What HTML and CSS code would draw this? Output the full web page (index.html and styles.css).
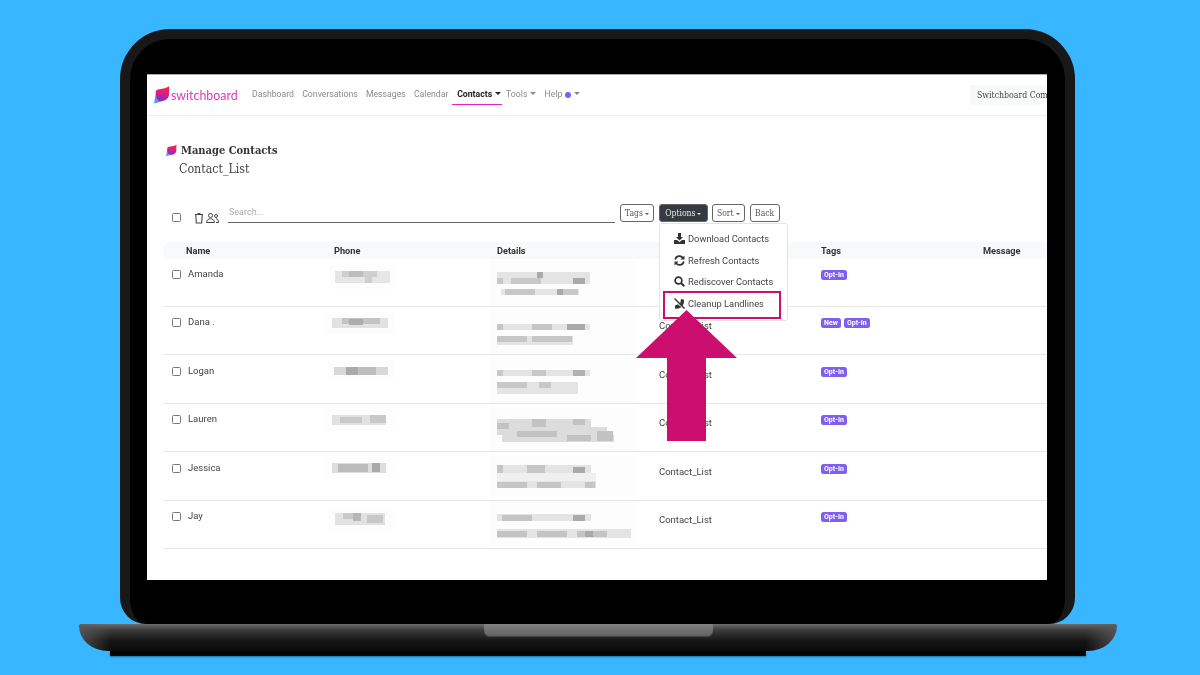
FILE: index.html
```html
<!DOCTYPE html>
<html lang="en">
<head>
<meta charset="utf-8">
<title>Switchboard - Manage Contacts</title>
<link rel="stylesheet" href="styles.css">
</head>
<body>
<svg class="defs" width="0" height="0" aria-hidden="true">
  <defs>
    <linearGradient id="leaf" x1="0.6" y1="0" x2="0.4" y2="1">
      <stop offset="0" stop-color="#f4263f"/><stop offset=".55" stop-color="#d81b8c"/><stop offset="1" stop-color="#6a35d8"/>
    </linearGradient>
    <linearGradient id="tail" x1="0" y1="0" x2="1" y2="1">
      <stop offset="0" stop-color="#9a7cf0"/><stop offset="1" stop-color="#3fa0f5"/>
    </linearGradient>
    <symbol id="logo" viewBox="0 0 18 20">
      <path fill="url(#tail)" d="M2 8 0 19.500C3 18.500 8 18 11.500 15z"/>
      <path fill="url(#leaf)" d="M2 6C3 3 9 3.500 12 2.500c2-.5 4-1.500 5-2.500v9c0 5-4 8-9 8-4 0-6-4-6-11z"/>
    </symbol>
  </defs>
</svg>
<div class="laptop">
  <div class="lid">
    <div class="screen">
      <nav class="nav">
        <div class="brand">
          <svg class="brand-mark" width="16" height="18"><use href="#logo"/></svg>
          <span class="brand-name">switchboard</span>
        </div>
        <a class="nav-link">Dashboard</a>
        <a class="nav-link">Conversations</a>
        <a class="nav-link">Messages</a>
        <a class="nav-link">Calendar</a>
        <a class="nav-link active caret">Contacts</a>
        <a class="nav-link caret">Tools</a>
        <a class="nav-link caret">Help <i class="dot"></i></a>
        <div class="account">Switchboard Com</div>
      </nav>
      <main class="main">
        <div class="title-row">
          <svg width="11" height="13"><use href="#logo"/></svg>
          <h1 class="title">Manage Contacts</h1>
        </div>
        <div class="subtitle">Contact_List</div>
        <div class="toolbar">
          <span class="check"></span>
          <svg class="tool-trash" width="10" height="12" viewBox="0 0 10 12" fill="none" stroke="#444" stroke-width="1.100"><path d="M3.500 1.500h3M1 2.500h8M1.800 2.500l.5 8.500h5.400l.5-8.500"/></svg>
          <svg class="tool-users" width="13" height="10" viewBox="0 0 13 10" fill="none" stroke="#444"><circle cx="4.500" cy="2.500" r="2"/><path d="M.6 9.500c0-5 7.800-5 7.800 0z"/><circle cx="10" cy="3" r="1.500"/><path d="M10 5.800c1.500 0 2.500 1.200 2.500 3.700h-2.500"/></svg>
          <div class="search">Search...</div>
          <button class="btn caret">Tags</button>
          <button class="btn dark caret">Options</button>
          <button class="btn caret">Sort</button>
          <button class="btn back">Back</button>
        </div>
        <div class="table">
          <div class="thead">
            <div class="th th-name">Name</div><div class="th">Phone</div><div class="th">Details</div><div class="th">Contact List</div><div class="th">Tags</div><div class="th">Message</div>
          </div>

          <div class="row">
            <div class="name"><span class="check"></span>Amanda</div>
            <div class="phone"><svg class="mos" width="55" height="12"><path fill="#e6e6e6" d="M0 0h55v6H0zM0 6h55v6H0z"/><path fill="#cfcfcf" d="M7 0h35v6H7zM30 6h7v6h-7z"/><path fill="#bdbdbd" d="M14 0h14v6H14z"/></svg></div>
            <div class="details"><svg class="mos" width="94" height="24"><path fill="#e4e4e4" d="M0 0h93v6H0zM0 6h93v6H0zM4 17h78v6H4z"/><path fill="#c8c8c8" d="M0 6h6v6H0zM14 6h30v6H14zM8 17h30v6H8zM65 17h16v6H65z"/><path fill="#aaa" d="M76 6h12v6H76zM40 0h6v6h-6zM60 17h6v6h-6z"/></svg></div>
            <div class="list">Contact_List</div>
            <div class="tags"><span class="badge">Opt-In</span></div>
            <div></div>
          </div>

          <div class="row">
            <div class="name"><span class="check"></span>Dana .</div>
            <div class="phone"><svg class="mos mos-left" width="57" height="10"><path fill="#e2e2e2" d="M0 0h56v10H0z"/><path fill="#c4c4c4" d="M10 0h38v6H10z"/><path fill="#adadad" d="M17 1h14v6H17z"/></svg></div>
            <div class="details"><svg class="mos mos-d2" width="94" height="22"><path fill="#e4e4e4" d="M0 0h93v6H0zM0 12h76v9H0z"/><path fill="#c6c6c6" d="M0 0h6v6H0zM35 0h20v6H35zM35 12h40v6H35zM0 12h30v6H0z"/><path fill="#aaa" d="M70 0h18v6H70z"/></svg></div>
            <div class="list">Contact_List</div>
            <div class="tags"><span class="badge">New</span><span class="badge">Opt-In</span></div>
            <div></div>
          </div>

          <div class="row">
            <div class="name"><span class="check"></span>Logan</div>
            <div class="phone"><svg class="mos mos-p3" width="55" height="8"><path fill="#d8d8d8" d="M0 0h54v8H0z"/><path fill="#bdbdbd" d="M12 0h30v8H12z"/><path fill="#aaa" d="M12 0h12v8H12z"/></svg></div>
            <div class="details"><svg class="mos mos-d3" width="94" height="24"><path fill="#e4e4e4" d="M0 0h93v6H0zM0 12h81v12H0z"/><path fill="#c8c8c8" d="M0 0h6v6H0zM35 0h14v6H35zM0 12h30v6H0zM42 12h12v6H42z"/><path fill="#b0b0b0" d="M76 0h12v6H76z"/></svg></div>
            <div class="list">Contact_List</div>
            <div class="tags"><span class="badge">Opt-In</span></div>
            <div></div>
          </div>

          <div class="row">
            <div class="name"><span class="check"></span>Lauren</div>
            <div class="phone"><svg class="mos mos-left" width="55" height="10"><path fill="#e2e2e2" d="M0 0h54v10H0z"/><path fill="#c8c8c8" d="M8 2h22v6H8zM38 0h16v8H38z"/></svg></div>
            <div class="details"><svg class="mos mos-d4" width="117" height="24"><path fill="#dcdcdc" d="M0 0h94v8H0zM0 8h110v8H0zM5 16h112v7H5z"/><path fill="#c2c2c2" d="M0 4h12v6H0zM35 0h14v8H35zM76 0h12v6H76zM20 12h40v6H20zM70 16h24v6H70zM100 12h16v10h-16z"/></svg></div>
            <div class="list">Contact_List</div>
            <div class="tags"><span class="badge">Opt-In</span></div>
            <div></div>
          </div>

          <div class="row">
            <div class="name"><span class="check"></span>Jessica</div>
            <div class="phone"><svg class="mos mos-left" width="55" height="10"><path fill="#dedede" d="M0 0h54v10H0z"/><path fill="#bcbcbc" d="M6 1h30v8H6z"/><path fill="#a8a8a8" d="M40 0h8v9h-8z"/></svg></div>
            <div class="details"><svg class="mos" width="100" height="24"><path fill="#e4e4e4" d="M0 0h94v8H0zM0 16h99v7H0z"/><path fill="#f0f0f0" d="M0 8h99v8H0z"/><path fill="#c6c6c6" d="M0 0h6v8H0zM30 0h18v8H30zM0 17h30v6H0zM40 17h24v6H40zM88 17h10v6H88z"/><path fill="#aaa" d="M76 2h12v6H76z"/></svg></div>
            <div class="list">Contact_List</div>
            <div class="tags"><span class="badge">Opt-In</span></div>
            <div></div>
          </div>

          <div class="row">
            <div class="name"><span class="check"></span>Jay</div>
            <div class="phone"><svg class="mos" width="52" height="12"><path fill="#e2e2e2" d="M0 0h50v12H0z"/><path fill="#c8c8c8" d="M8 0h12v6H8zM32 2h16v8H32z"/><path fill="#b8b8b8" d="M18 0h8v8h-8z"/></svg></div>
            <div class="details"><svg class="mos" width="135" height="25"><path fill="#e4e4e4" d="M0 0h94v7H0zM0 15h134v9H0z"/><path fill="#c4c4c4" d="M5 1h30v6H5zM0 17h30v6H0zM40 17h30v6H40zM80 17h30v6H80z"/><path fill="#aaa" d="M76 1h12v6H76zM88 17h8v6h-8z"/></svg></div>
            <div class="list">Contact_List</div>
            <div class="tags"><span class="badge">Opt-In</span></div>
            <div></div>
          </div>
        </div>
      </main>

      <div class="menu">
        <div class="menu-item">
          <svg width="11" height="11" viewBox="0 0 11 11" fill="#333"><path d="M4 0h3v4h2L5.500 7.500 2 4h2zM0 7h3l2.500 2L8 7h3v4H0z"/></svg>
          Download Contacts
        </div>
        <div class="menu-item">
          <svg width="11" height="11" viewBox="0 0 11 11" fill="none" stroke="#333" stroke-width="1.700"><path d="M1.200 4.500A4.300 4.300 0 0 1 9 3M9.800 6.500A4.300 4.300 0 0 1 2 8"/><path fill="#333" stroke="none" d="M10.500 .5v4h-4zM.5 10.500v-4h4z"/></svg>
          Refresh Contacts
        </div>
        <div class="menu-item">
          <svg width="11" height="11" viewBox="0 0 11 11" fill="none" stroke="#333" stroke-width="1.700"><circle cx="4.500" cy="4.500" r="3.400"/><path d="m7 7 3.300 3.300" stroke-width="2"/></svg>
          Rediscover Contacts
        </div>
        <div class="menu-item">
          <svg width="11" height="11" viewBox="0 0 11 11" fill="#333"><path d="M7 1l3 .8c.3 3-.6 5-2 6.500L6 6.500zM1 7.500l3-1.200 1.500 1.500 2 1.200C6 10.500 3 11 1 10.500z"/><path stroke="#333" stroke-width="1.400" d="M.5.500l10 10"/></svg>
          Cleanup Landlines
        </div>
      </div>
      <div class="highlight"></div>
      <svg class="arrow" width="101" height="131" viewBox="0 0 101 131"><path fill="#cc0e6e" d="M50.500 0 101 48H70v83H31V48H0z"/></svg>
    </div>
  </div>
  <div class="base">
    <div class="base-top"><div class="notch"></div></div>
    <div class="foot"></div>
  </div>
</div>
</body>
</html>
```

FILE: styles.css
```css
* { box-sizing: border-box; }
html, body { margin: 0; height: 100%; }
body {
  width: 1200px;
  height: 675px;
  overflow: hidden;
  background: #38b6ff;
  font-family: Roboto, "Liberation Sans", sans-serif;
  color: #444;
}
.defs { position: absolute; }
.laptop {
  display: flex;
  flex-direction: column;
  align-items: center;
  width: 1038px;
  margin: 29px 0 0 79px;
}
.lid {
  width: 955px;
  height: 595px;
  margin-left: -1px;
  padding: 35px 18px 0 17px;
  background: #000;
  border: 10px solid #181818;
  border-bottom: 0;
  border-radius: 50px 50px 26px 26px;
}
.screen {
  position: relative;
  width: 900px;
  height: 506px;
  overflow: hidden;
  background: #fff;
  border-top: 1px solid #aaa;
  filter: blur(.35px);
}

/* navbar */
.nav {
  display: flex;
  align-items: center;
  height: 41px;
  padding-left: 7px;
  border-bottom: 1px solid #ececec;
  font-size: 8.700px;
}
.brand { display: flex; align-items: center; gap: 1px; width: 98px; }
.brand-name { font-family: Lato, sans-serif; font-size: 12.400px; color: #e036c0; }
.nav-link { margin: 0 8.200px 2px 0; color: #8a8a8a; white-space: nowrap; }
.nav-link.active {
  margin: 0 4px .5px -4.500px;
  padding: 0 1px 0 5px;
  line-height: 20px;
  color: #222;
  font-weight: 700;
  border-bottom: 1.500px solid #e91fc0;
}
.caret::after {
  content: "";
  display: inline-block;
  margin-left: 3px;
  vertical-align: 2px;
  border: 3px solid transparent;
  border-top-color: currentColor;
  border-bottom: 0;
}
.dot {
  display: inline-block;
  width: 6px;
  height: 6px;
  border-radius: 50%;
  background: #7b61f0;
  vertical-align: -.5px;
}
.account {
  flex: none;
  width: 77px;
  margin-left: auto;
  padding: 0 0 0 7px;
  overflow: hidden;
  white-space: nowrap;
  line-height: 20px;
  background: #f8f9fa;
  font-family: "DejaVu Serif Condensed", "DejaVu Serif", serif;
  font-stretch: condensed;
  font-size: 8.700px;
  color: #444;
}

/* heading */
.main { padding: 25px 0 0 16px; }
.title-row { display: flex; align-items: center; gap: 4px; height: 19px; padding-left: 3px; }
.title {
  margin: 0;
  font-family: "DejaVu Serif Condensed", "DejaVu Serif", serif;
  font-stretch: condensed;
  font-size: 11px;
  font-weight: 700;
  color: #333;
}
.subtitle {
  padding-left: 16px;
  line-height: 19px;
  font-family: "DejaVu Serif Condensed", "DejaVu Serif", serif;
  font-stretch: condensed;
  font-size: 12.300px;
  color: #444;
}

/* toolbar */
.toolbar { display: flex; align-items: flex-start; height: 19px; margin-top: 25px; }
.check {
  flex: none;
  display: inline-block;
  width: 9px;
  height: 9px;
  border: 1px solid #777;
  border-radius: 1.500px;
}
.toolbar > .check { margin: 9px 0 0 9px; }
.tool-trash { margin: 8px 0 0 13px; }
.tool-users { margin: 9px 0 0 2px; }
.search {
  width: 387px;
  height: 19px;
  margin: 0 5px 0 9px;
  padding: 3px 0 0 1px;
  border-bottom: 1px solid #666;
  font-size: 9px;
  color: #aaa;
}
.btn {
  height: 18px;
  margin-right: 5px;
  padding: 0 4px;
  background: #fff;
  border: 1px solid #666;
  border-radius: 3px;
  font-family: "DejaVu Serif Condensed", "DejaVu Serif", serif;
  font-stretch: condensed;
  font-size: 8.500px;
  color: #555;
  white-space: nowrap;
}
.btn.dark { background: #343a40; color: #e8e8e8; margin-right: 4px; padding: 0 5.500px; }
.btn.back { padding: 0 4.500px; }
.btn.caret::after { vertical-align: 1.500px; margin-left: 2px; border-width: 2.500px; border-bottom: 0; }

/* table */
.table { margin-top: 19px; }
.thead, .row {
  display: grid;
  grid-template-columns: 171px 163px 162px 162px 162px 1fr;
}
.thead {
  height: 16.600px;
  background: #f8f9fa;
  border-radius: 8px 0 0 8px;
}
.th { font-size: 9.200px; font-weight: 700; line-height: 18px; color: #333; }
.th-name { padding-left: 23px; }
.row {
  height: 48.400px;
  border-bottom: 1px solid #e8e8e8;
  font-size: 9.500px;
}
.name {
  display: flex;
  align-items: flex-start;
  gap: 7px;
  padding: 10.500px 0 0 9px;
  line-height: 10px;
}
.name .check { margin-top: 1px; }
.phone { padding-top: 12px; }
.phone .mos { box-shadow: 0 0 0 6px #fdfdfd; background: #fdfdfd; margin-left: 1px; }
.phone .mos-left { margin-left: -2px; margin-top: -1px; }
.phone .mos-p3 { margin-left: 0; margin-top: 0; }
.details { margin-left: -7px; padding: 13px 0 0 7px; background: #fcfdfc; width: 146px; }
.details .mos-d2 { margin-top: 4px; }
.details .mos-d3 { margin-top: 2px; }
.details .mos-d4 { margin-top: 2px; }
.mos { display: block; filter: blur(.7px); }
.list { padding-top: 13.500px; line-height: 12px; }
.tags { display: flex; gap: 3px; align-items: flex-start; padding-top: 11.500px; }
.badge {
  padding: 0 3px;
  height: 10px;
  line-height: 10px;
  border-radius: 2.500px;
  background: #7f5ff1;
  color: #fff;
  font-size: 7px;
  font-weight: 700;
}

/* overlays */
.menu {
  position: absolute;
  left: 512px;
  top: 148px;
  width: 129px;
  height: 98px;
  padding: 4px 0 0 14px;
  background: #fff;
  border: 1px solid #e4e4e4;
  border-radius: 3px;
  font-size: 9.300px;
  color: #444;
}
.menu-item { display: flex; align-items: center; gap: 3px; height: 21.500px; white-space: nowrap; }
.highlight {
  position: absolute;
  left: 516px;
  top: 216px;
  width: 118px;
  height: 28px;
  border: 2px solid #cc0e6e;
}
.arrow { position: absolute; left: 489px; top: 235px; }

/* laptop base */
.base { display: flex; flex-direction: column; align-items: center; width: 100%; }
.base-top {
  display: flex;
  justify-content: center;
  width: 100%;
  height: 27px;
  background:
    linear-gradient(90deg, rgba(90,90,90,.8), rgba(90,90,90,0) 32px, rgba(90,90,90,0) calc(100% - 32px), rgba(90,90,90,.8)),
    linear-gradient(#6c6c6c, #3c3c3c 6px, #151515 17px, #0a0a0a);
  border-radius: 2px 2px 30px 30px / 2px 2px 26px 26px;
}
.notch {
  width: 229px;
  height: 13px;
  background: linear-gradient(#828282, #5f5f5f);
  border-radius: 0 0 6px 6px;
  box-shadow: inset 0 -1px 0 #444;
}
.foot {
  width: 976px;
  height: 5px;
  background: #050505;
  box-shadow: 0 1px 2px rgba(0,40,70,.5);
}
```
